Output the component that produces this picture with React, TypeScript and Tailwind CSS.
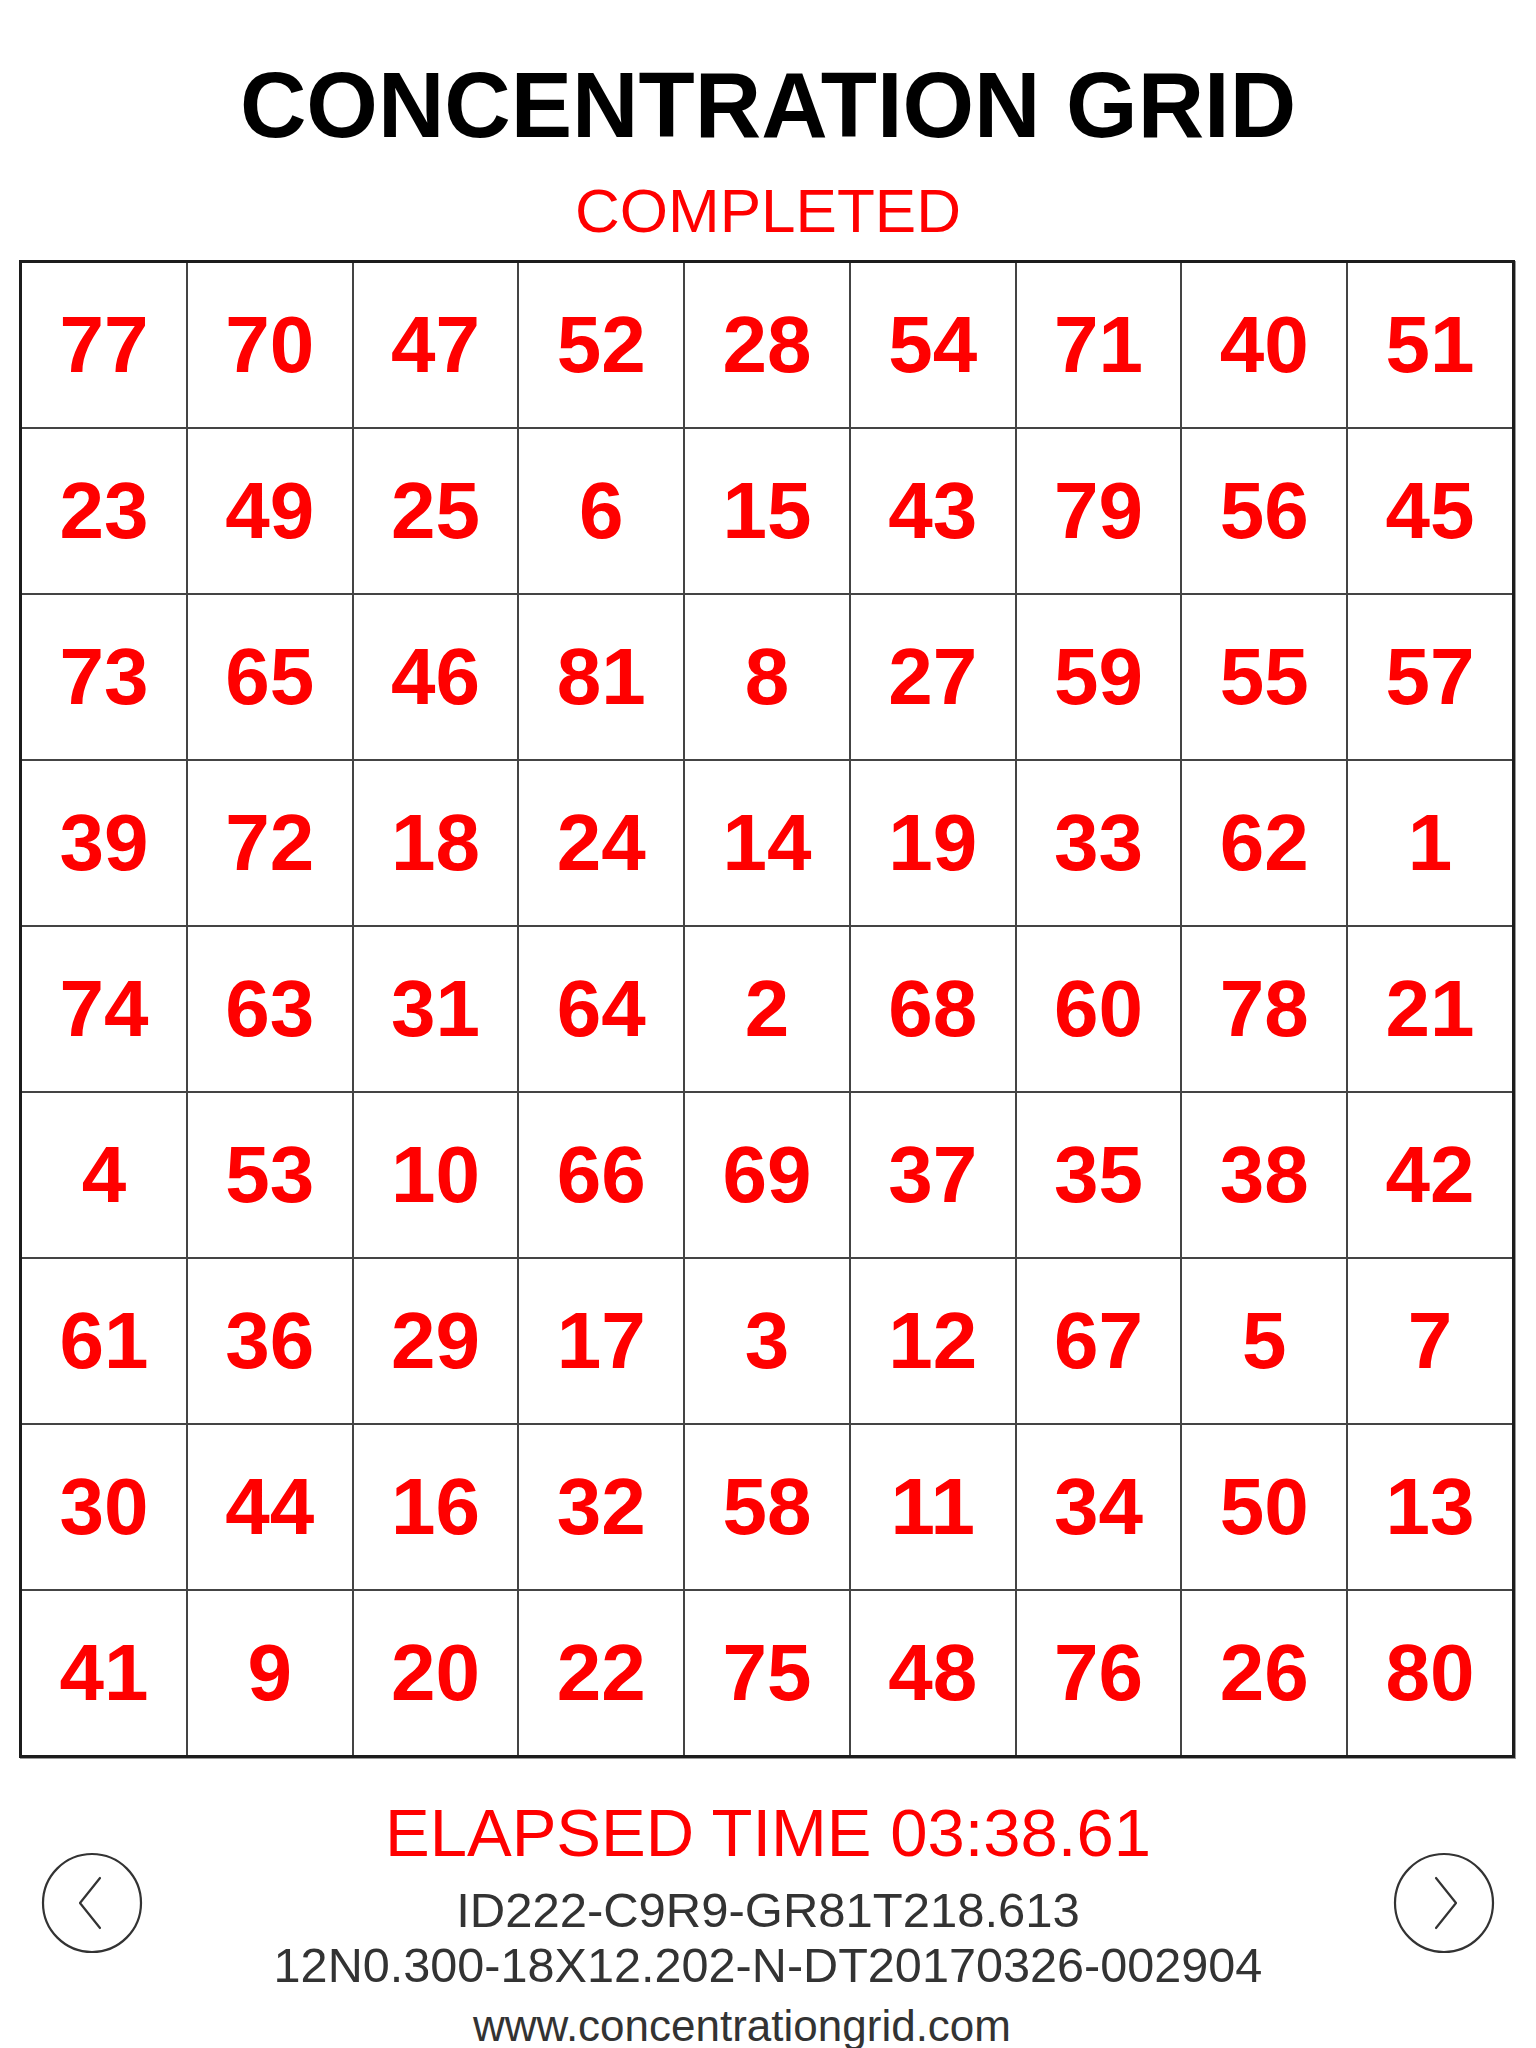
import React from 'react';

const rows: number[][] = [
  [77, 70, 47, 52, 28, 54, 71, 40, 51],
  [23, 49, 25, 6, 15, 43, 79, 56, 45],
  [73, 65, 46, 81, 8, 27, 59, 55, 57],
  [39, 72, 18, 24, 14, 19, 33, 62, 1],
  [74, 63, 31, 64, 2, 68, 60, 78, 21],
  [4, 53, 10, 66, 69, 37, 35, 38, 42],
  [61, 36, 29, 17, 3, 12, 67, 5, 7],
  [30, 44, 16, 32, 58, 11, 34, 50, 13],
  [41, 9, 20, 22, 75, 48, 76, 26, 80],
];

function NavButton({ dir }: { dir: 'prev' | 'next' }) {
  const d = dir === 'prev' ? 'M59 26 L39 51 L59 76' : 'M43 26 L63 51 L43 76';
  return (
    <button className="mt-[53px] h-[102px] w-[102px] shrink-0" aria-label={dir}>
      <svg width="102" height="102" viewBox="0 0 102 102" fill="none">
        <circle cx="51" cy="51" r="49" stroke="#333" strokeWidth="2.2" />
        <path d={d} stroke="#333" strokeWidth="2.2" strokeLinecap="round" strokeLinejoin="round" />
      </svg>
    </button>
  );
}

export default function App() {
  return (
    <div className="w-[1536px] h-[2048px] overflow-hidden bg-white font-['Liberation_Sans',Arial,sans-serif]">
      {/* Header */}
      <h1 className="pt-[59px] text-center text-[92px] font-bold leading-none text-black">
        CONCENTRATION GRID
      </h1>
      <p className="mt-[29px] text-center text-[62px] leading-none text-[#ff0000]">COMPLETED</p>

      {/* Grid */}
      <div className="mt-[18px] ml-[19px] w-[1496px] border-[3px] border-[#1c1c1c] bg-[#444] shadow-[1px_1px_0_#999]">
        <div className="grid grid-cols-9 gap-[2px]">
          {rows.flat().map((n, i) => (
            <div
              key={i}
              className="flex h-[164px] items-center justify-center bg-white text-[80px] font-bold leading-none text-[#ff0000]"
            >
              {n}
            </div>
          ))}
        </div>
      </div>

      {/* Footer */}
      <div className="mt-[41px] flex items-start justify-between px-[41px]">
        <NavButton dir="prev" />
        <div className="flex flex-col items-center">
          <p className="text-[67px] leading-none text-[#ff0000]">ELAPSED TIME 03:38.61</p>
          <p className="mt-[20px] text-[49px] leading-none text-[#333]">ID222-C9R9-GR81T218.613</p>
          <p className="mt-[6px] text-[48.6px] leading-none text-[#333]">12N0.300-18X12.202-N-DT20170326-002904</p>
          <p className="mt-[14px] mr-[52px] text-[44px] leading-none text-[#333]">www.concentrationgrid.com</p>
        </div>
        <NavButton dir="next" />
      </div>
    </div>
  );
}
